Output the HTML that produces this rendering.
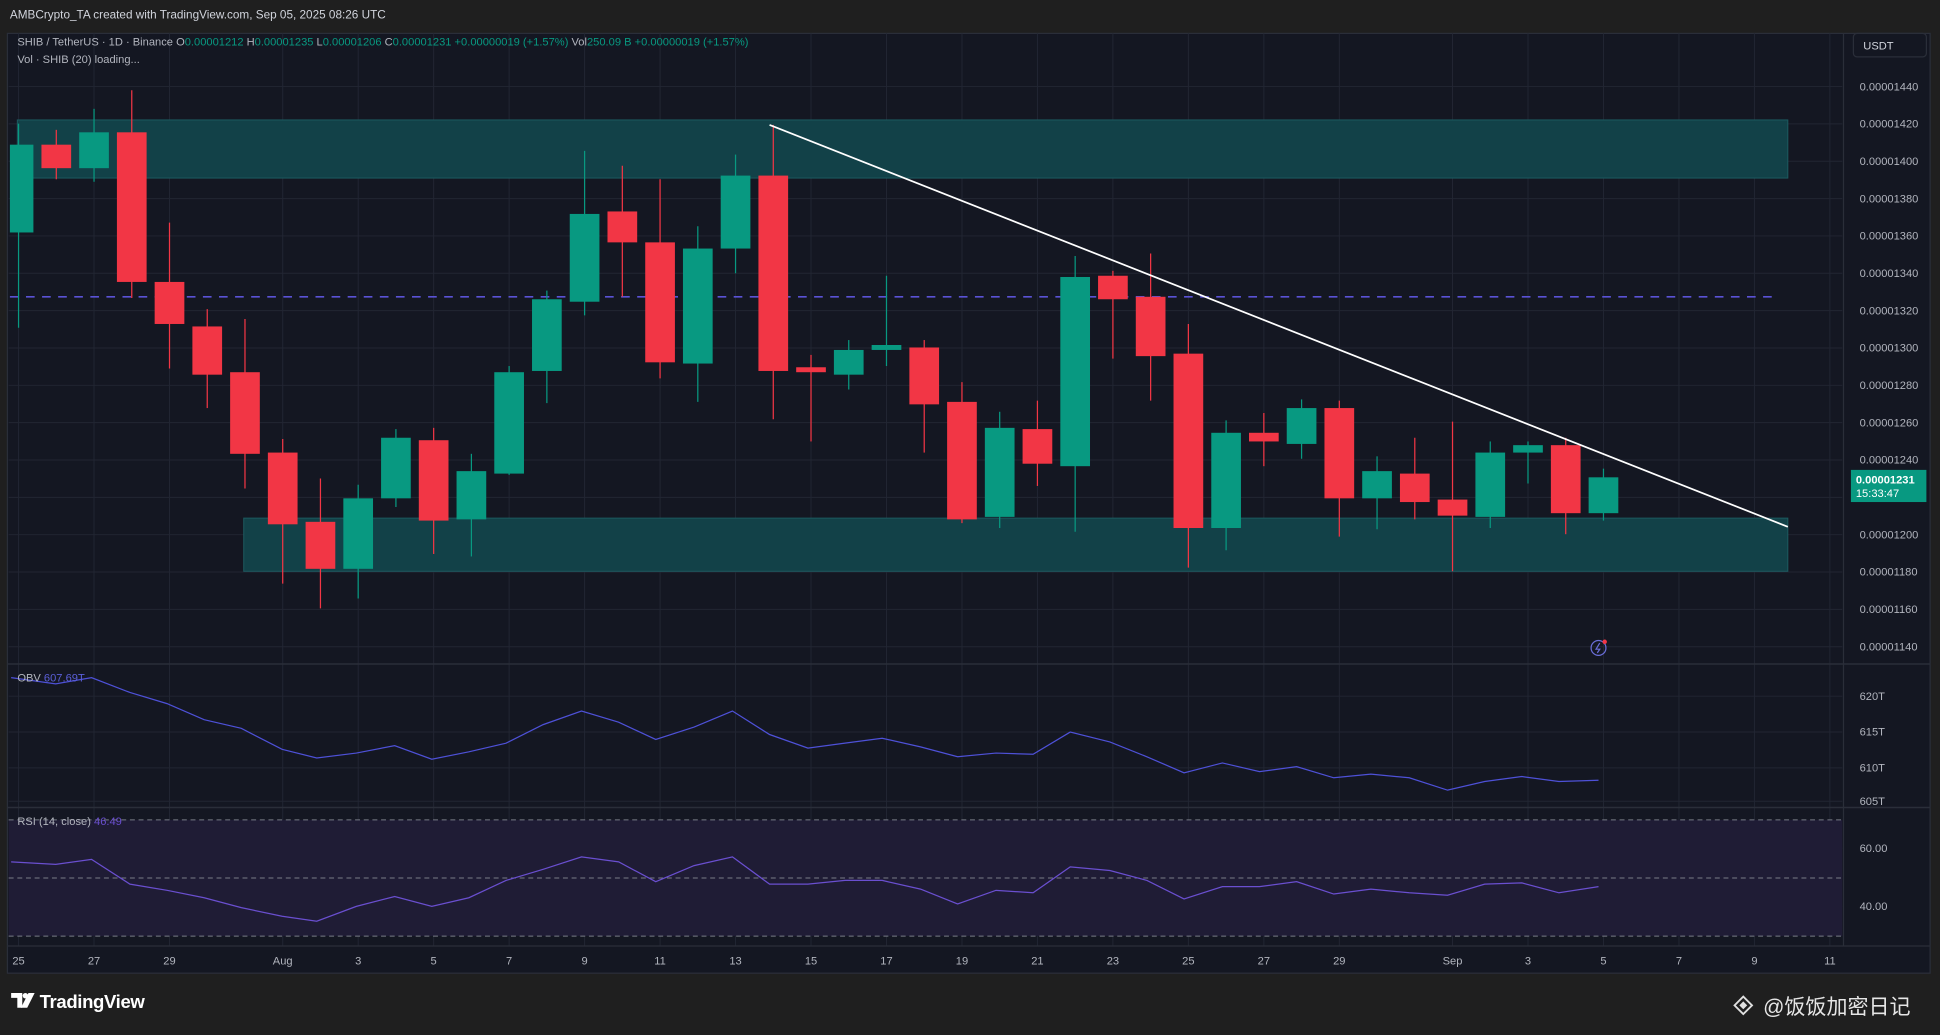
<!DOCTYPE html>
<html><head><meta charset="utf-8"><style>
html,body{margin:0;padding:0;background:#1f1f1f;width:1940px;height:1035px;overflow:hidden}
svg{display:block}
text{font-family:"Liberation Sans","Noto Sans CJK SC",sans-serif}
</style></head><body>
<svg id="s" width="1940" height="1035" viewBox="0 0 1568 837" preserveAspectRatio="none" xmlns="http://www.w3.org/2000/svg">
<rect x="0" y="0" width="1568" height="837" fill="#1f1f1f"/>
<text x="8" y="15" fill="#d1d4dc" font-size="9.5">AMBCrypto_TA created with TradingView.com, Sep 05, 2025 08:26 UTC</text>
<rect x="6" y="27" width="1554" height="760" fill="#141722" stroke="#2a2e39" stroke-width="1"/>
<g id="grid" stroke="#222633" stroke-width="0.8"></g>
<!-- RSI background -->
<rect x="7" y="663" width="1482" height="94" fill="#1f1c35"/>
<!-- separators -->
<line x1="6" y1="537" x2="1560" y2="537" stroke="#2a2e39" stroke-width="1.2"/>
<line x1="6" y1="653" x2="1560" y2="653" stroke="#2a2e39" stroke-width="1.2"/>
<line x1="6" y1="765" x2="1560" y2="765" stroke="#2a2e39" stroke-width="1"/>
<line x1="1490" y1="27" x2="1490" y2="765" stroke="#2a2e39" stroke-width="1"/>
<!-- zones -->
<rect x="14" y="97" width="1431" height="47" fill="#124148" stroke="#1d5a60" stroke-width="0.8"/>
<rect x="197" y="419" width="1248" height="43" fill="#124148" stroke="#1d5a60" stroke-width="0.8"/>
<line x1="8" y1="240" x2="1432" y2="240" stroke="#5a52d6" stroke-width="1.3" stroke-dasharray="7,6"/>
<g id="candles"></g>
<line x1="622" y1="101" x2="1445" y2="426" stroke="#ffffff" stroke-width="1.4"/>
<!-- RSI dashes -->
<line x1="7" y1="663" x2="1489" y2="663" stroke="#787b86" stroke-width="0.8" stroke-dasharray="4,3"/>
<line x1="7" y1="710" x2="1489" y2="710" stroke="#787b86" stroke-width="0.8" stroke-dasharray="4,3"/>
<line x1="7" y1="757" x2="1489" y2="757" stroke="#787b86" stroke-width="0.8" stroke-dasharray="4,3"/>
<polyline id="obv" fill="none" stroke="#4e51d8" stroke-width="1"/>
<polyline id="rsi" fill="none" stroke="#6a4fd0" stroke-width="1"/>
<!-- legends -->
<text x="14" y="37" font-size="9" fill="#b2b5be">SHIB / TetherUS · 1D · Binance <tspan>O</tspan><tspan fill="#089981">0.00001212</tspan> H<tspan fill="#089981">0.00001235</tspan> L<tspan fill="#089981">0.00001206</tspan> C<tspan fill="#089981">0.00001231</tspan> <tspan fill="#089981">+0.00000019 (+1.57%)</tspan> Vol<tspan fill="#089981">250.09 B</tspan> <tspan fill="#089981">+0.00000019 (+1.57%)</tspan></text>
<text x="14" y="51" font-size="9" fill="#b2b5be">Vol · SHIB (20) loading...</text>
<text x="14" y="551" font-size="9" fill="#b2b5be">OBV <tspan fill="#5b5fd8">607.69T</tspan></text>
<text x="14" y="667" font-size="9" fill="#b2b5be">RSI (14, close) <tspan fill="#6a4fd0">46.49</tspan></text>
<!-- USDT box -->
<rect x="1498" y="27" width="59" height="19" rx="3" fill="#141722" stroke="#2a2e39"/>
<text x="1506" y="40" font-size="9" fill="#d1d4dc">USDT</text>
<g id="plabels" font-size="9" fill="#b2b5be"></g>
<rect x="1496" y="380" width="61" height="26" fill="#089981"/>
<text x="1500" y="391" font-size="9" fill="#fff" font-weight="bold">0.00001231</text>
<text x="1500" y="402" font-size="9" fill="#fff">15:33:47</text>
<g id="tlabels" font-size="9" fill="#b2b5be"></g>
<!-- lightning icon -->
<circle cx="1292" cy="524" r="6" fill="none" stroke="#6a6ed8" stroke-width="1"/>
<path d="M1293 520 L1290 525 L1293 525 L1291 528" fill="none" stroke="#6a6ed8" stroke-width="1"/>
<circle cx="1297" cy="519" r="1.8" fill="#f23645"/>
<!-- footer -->
<g transform="translate(9,803)" fill="#ffffff">
<path d="M0 0 H9 V12 H5 V4 H0 Z"/><circle cx="11.5" cy="2.2" r="2.2"/><path d="M14 0 H19 L13 12 H8 Z"/>
</g>
<text x="32" y="815" font-size="15" fill="#ffffff" font-weight="bold" letter-spacing="-0.3">TradingView</text>
<g transform="translate(1409,813) rotate(45)" fill="none" stroke="#e0e0e0" stroke-width="1.5">
<rect x="-5" y="-5" width="10" height="10"/><rect x="-1.5" y="-1.5" width="3" height="3" fill="#e0e0e0"/>
</g>
<text x="1425" y="820" font-size="17" fill="#e6e6e6">@饭饭加密日记</text>
</svg>
<script>
var NS="http://www.w3.org/2000/svg";
function el(t,a,p){var e=document.createElementNS(NS,t);for(var k in a)e.setAttribute(k,a[k]);document.getElementById(p).appendChild(e);return e;}
var c=[[1,117,188,100,265],[0,117,136,105,145],[1,107,136,88,147],[0,107,228,73,241],[0,228,262,180,298],[0,264,303,250,330],[0,301,367,258,395],[0,366,424,355,472],[0,422,460,387,492],[1,403,460,392,484],[1,354,403,347,410],[0,356,421,346,448],[1,381,420,367,450],[1,301,383,296,384],[1,242,300,235,326],[1,173,244,122,255],[0,171,196,134,240],[0,196,293,145,306],[1,201,294,183,325],[1,142,201,125,221],[0,142,300,101,339],[0,297,301,287,357],[1,283,303,275,315],[1,279,283,223,296],[0,281,327,275,366],[0,325,420,309,423],[1,346,418,333,427],[0,347,375,324,393],[1,224,377,207,430],[0,223,242,219,290],[0,240,288,205,324],[0,286,427,262,459],[1,350,427,340,445],[0,350,357,334,377],[1,330,359,323,371],[0,330,403,324,434],[1,381,403,369,428],[0,383,406,354,420],[0,404,417,341,462],[1,366,418,357,427],[1,360,366,357,391],[0,360,415,354,432],[1,386,415,379,421]];
c.forEach(function(d,i){var x=15+i*30.5,col=d[0]?"#089981":"#f23645";
el("line",{x1:x,x2:x,y1:d[3],y2:d[4],stroke:col,"stroke-width":1},"candles");
var x0=Math.max(x-12,8);el("rect",{x:x0,y:d[1],width:(x+12)-x0,height:Math.max(d[2]-d[1],2),fill:col},"candles");});
// price labels + grid
for(var k=0;k<16;k++){var y=70+k*(523-70)/15,p=1440-k*20;
el("line",{x1:7,x2:1489,y1:y,y2:y},"grid");
var t=el("text",{x:1503,y:y+3},"plabels");t.textContent="0.0000"+p;}
[[563,"620T"],[592,"615T"],[621,"610T"],[648,"605T"]].forEach(function(a){el("line",{x1:7,x2:1489,y1:a[0],y2:a[0]},"grid");var t=el("text",{x:1503,y:a[0]+3},"plabels");t.textContent=a[1];});
[[686,"60.00"],[733,"40.00"]].forEach(function(a){el("line",{x1:7,x2:1489,y1:a[0],y2:a[0]},"grid");var t=el("text",{x:1503,y:a[0]+3},"plabels");t.textContent=a[1];});
var tl=[[0,"25"],[2,"27"],[4,"29"],[7,"Aug"],[9,"3"],[11,"5"],[13,"7"],[15,"9"],[17,"11"],[19,"13"],[21,"15"],[23,"17"],[25,"19"],[27,"21"],[29,"23"],[31,"25"],[33,"27"],[35,"29"],[38,"Sep"],[40,"3"],[42,"5"],[44,"7"],[46,"9"],[48,"11"]];
tl.forEach(function(a){var x=15+a[0]*30.5;el("line",{x1:x,x2:x,y1:27,y2:765},"grid");var t=el("text",{x:x,y:780,"text-anchor":"middle"},"tlabels");t.textContent=a[1];});
var obv="9,548 45,553 74,548 105,560 135,569 165,582 195,589 228,606 256,613 288,609 319,603 349,614 379,608 409,601 439,586 470,575 500,584 530,598 561,588 592,575 622,594 653,605 683,601 713,597 744,604 774,612 805,609 835,610 865,592 897,600 927,612 957,625 988,617 1018,624 1048,620 1078,629 1108,626 1139,629 1170,639 1200,632 1230,628 1260,632 1292,631";
document.getElementById("obv").setAttribute("points",obv);
var rsi="9,697 45,699 74,695 105,715 135,720 165,726 195,734 228,741 256,745 288,733 319,725 349,733 379,726 409,712 439,703 470,693 500,697 530,713 561,700 592,693 622,715 653,715 683,712 713,712 744,719 774,731 805,720 835,722 865,701 897,704 927,712 957,727 988,717 1018,717 1048,713 1078,723 1108,719 1139,722 1170,724 1200,715 1230,714 1260,722 1292,717";
document.getElementById("rsi").setAttribute("points",rsi);
</script>
</body></html>
